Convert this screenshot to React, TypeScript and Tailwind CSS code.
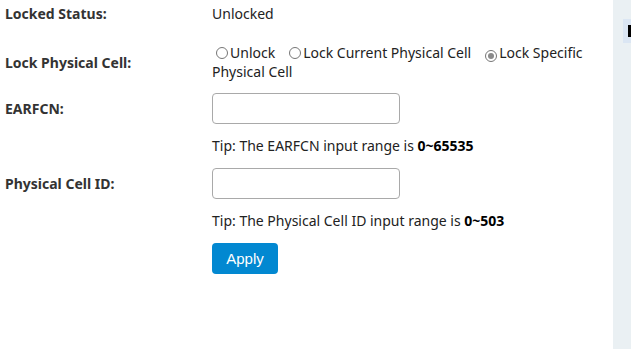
const Circle = ({ checked }: { checked?: boolean }) => (
  <span className="mr-[2px] inline-flex h-[12px] w-[12px] items-center justify-center rounded-full border border-[#767676] bg-white align-[-1px]">
    {checked && <span className="h-[6px] w-[6px] rounded-full bg-[#8a8a8a]" />}
  </span>
);

const Label = ({ children }: { children: React.ReactNode }) => (
  <div className="w-[207px] shrink-0 font-bold text-[#333]">{children}</div>
);

export default function App() {
  return (
    <div className="flex h-[349px] w-full overflow-hidden bg-white font-['Noto_Sans','Open_Sans',sans-serif] text-[14px] leading-[19px] text-[#222]">
      <main className="flex flex-1 flex-col pl-[5px]">
        <div className="flex h-[26px] items-center">
          <Label>Locked Status:</Label>
          <div>Unlocked</div>
        </div>

        <div className="mt-[17px] flex items-center">
          <Label>Lock Physical Cell:</Label>
          <div className="w-[392px] indent-[4px]">
            <span className="mr-[14px] whitespace-nowrap">
              <Circle />
              Unlock
            </span>
            <span className="mr-[14px] whitespace-nowrap">
              <Circle />
              Lock Current Physical Cell
            </span>
            <span className="whitespace-nowrap">
              <Circle checked />
              Lock Specific
            </span>{' '}
            Physical Cell
          </div>
        </div>

        <div className="mt-[12px] flex items-center">
          <Label>EARFCN:</Label>
          <input className="h-[31px] w-[188px] rounded-[4px] border border-[#a9a9a9] px-2 outline-none" />
        </div>
        <div className="ml-[207px] mt-[12px]">
          Tip: The EARFCN input range is <b className="text-black">0~65535</b>
        </div>

        <div className="mt-[13px] flex items-center">
          <Label>Physical Cell ID:</Label>
          <input className="h-[31px] w-[188px] rounded-[4px] border border-[#a9a9a9] px-2 outline-none" />
        </div>
        <div className="ml-[207px] mt-[12px]">
          Tip: The Physical Cell ID input range is <b className="text-black">0~503</b>
        </div>

        <div className="ml-[207px] mt-[13px]">
          <button className="h-[31px] w-[66px] rounded-[4px] bg-[#0288d1] font-['Liberation_Sans',sans-serif] text-[15px] text-white">
            Apply
          </button>
        </div>
      </main>

      <aside className="w-[18px] shrink-0 overflow-hidden bg-[#eaf0f3] pl-[10px] pt-[19px]">
        <div className="h-[24px] w-[8px] overflow-hidden bg-[#dbe6f3] pl-[5px] pt-[6px]">
          <div className="h-[12px] w-[3px] bg-black" />
        </div>
      </aside>
    </div>
  );
}
